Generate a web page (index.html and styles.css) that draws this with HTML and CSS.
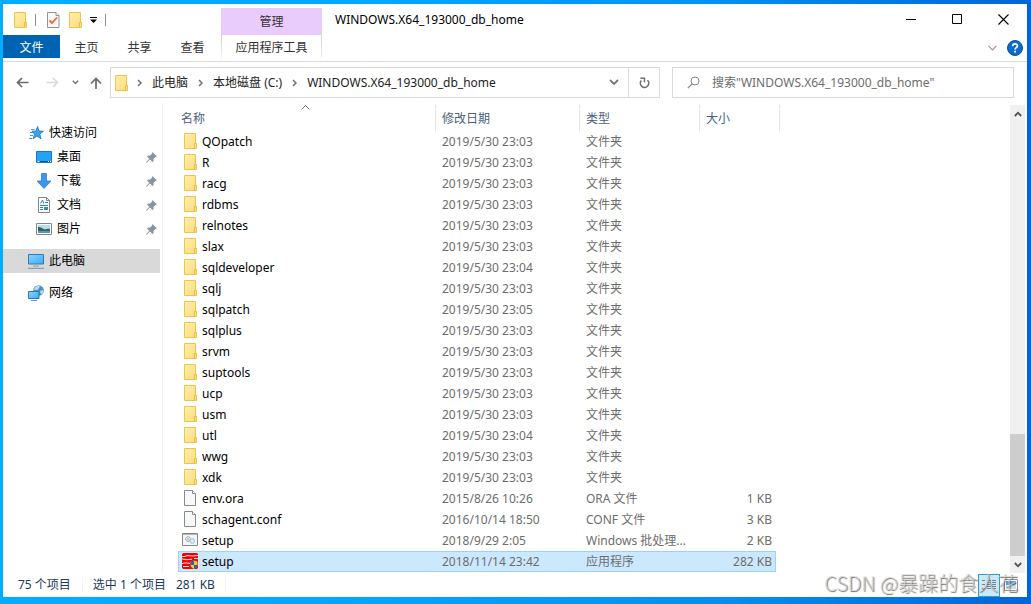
FILE: index.html
```html
<!DOCTYPE html>
<html lang="zh-CN">
<head>
<meta charset="utf-8">
<title>WINDOWS.X64_193000_db_home</title>
<link rel="stylesheet" href="styles.css">
</head>
<body>
<svg class="defs" aria-hidden="true">
  <linearGradient id="fold" x1="0" y1="0" x2="1" y2="1"><stop offset="0" stop-color="#ffeeb0"/><stop offset="1" stop-color="#fbdc77"/></linearGradient>
  <linearGradient id="screen" x1="0" y1="0" x2="1" y2="1"><stop offset="0" stop-color="#8fd3fd"/><stop offset="1" stop-color="#35adf8"/></linearGradient>
  <symbol id="folder" viewBox="0 0 14 16"><path d="M1.500.5h11v10h1v5h-12z" fill="url(#fold)" stroke="#ecc64c"/><path d="M11.500 15.500v-5h2" fill="none" stroke="#e8bd3e"/></symbol>
  <symbol id="page" viewBox="0 0 14 16"><path d="M1.500.5h8l3 3v12h-11z" fill="#f7f8f9" stroke="#8b8b8b"/><path d="M9.500.5v3h3" fill="#fff" stroke="#8b8b8b"/></symbol>
  <symbol id="pin" viewBox="0 0 11 11"><path d="M6.500 0 11 4.500 9.500 5 7.500 7v2.500L6.500 10 4 7.500.8 10.500 0 10.800l.4-1L3.300 6.700 1 4.500 2 3.500h2.300L6 1.500z" fill="#8995a0"/></symbol>
  <symbol id="chev-right" viewBox="0 0 5 8"><path d="M1 1l3 3-3 3" fill="none" stroke="#707070" stroke-width="1.500"/></symbol>
</svg>

<div class="window">
  <header class="titlebar">
    <div class="quick">
      <svg class="folder" width="14" height="16"><use href="#folder"/></svg>
      <span class="bar"></span>
      <button class="plain" aria-label="属性"><svg width="13" height="16" viewBox="0 0 13 16"><path d="M.5.5h8.500l3 3v12H.5z" fill="#f8f8f8" stroke="#929292"/><path d="M9 .5v3h3" fill="#fff" stroke="#929292"/><path d="M2.500 8.500 5 11l5-5.500" fill="none" stroke="#f0642a" stroke-width="1.800"/></svg></button>
      <button class="plain" aria-label="新建文件夹"><svg class="folder" width="14" height="16"><use href="#folder"/></svg></button>
      <button class="plain" aria-label="自定义快速访问工具栏"><svg width="7" height="6" viewBox="0 0 7 6"><path d="M0 .5h7" stroke="#000"/><path d="M0 2.500h7L3.500 6z"/></svg></button>
      <span class="bar"></span>
    </div>
    <div class="context">管理</div>
    <h1 class="title">WINDOWS.X64_193000_db_home</h1>
    <div class="controls">
      <button aria-label="最小化"><svg width="11" height="11" viewBox="0 0 11 11"><path d="M0 5.500h10" stroke="#000"/></svg></button>
      <button aria-label="最大化"><svg width="11" height="11" viewBox="0 0 11 11"><path d="M.5.5h9v9h-9z" fill="none" stroke="#000"/></svg></button>
      <button aria-label="关闭"><svg width="11" height="11" viewBox="0 0 11 11"><path d="M.5.5l10 10m0-10-10 10" stroke="#000" stroke-width="1.100"/></svg></button>
    </div>
  </header>

  <nav class="ribbon">
    <button class="file">文件</button>
    <button>主页</button>
    <button>共享</button>
    <button>查看</button>
    <button class="tools">应用程序工具</button>
    <div class="help">
      <button class="plain" aria-label="展开功能区"><svg width="9" height="6" viewBox="0 0 9 6"><path d="M.5.8l4 4 4-4" fill="none" stroke="#999" stroke-width="1.200"/></svg></button>
      <button class="plain" aria-label="帮助"><svg width="16" height="16" viewBox="0 0 16 16"><circle cx="8" cy="8" r="7.500" fill="#0a6cc4" stroke="#08549c"/><path d="M5.700 6.200c0-3 4.700-3 4.700-.3 0 1.800-2.300 1.700-2.300 3.600" fill="none" stroke="#fff" stroke-width="1.800"/><path d="M7.200 10.800h1.800v1.800H7.200z" fill="#fff"/></svg></button>
    </div>
  </nav>

  <div class="navrow">
    <div class="arrows">
      <button class="plain" aria-label="后退"><svg width="13" height="11" viewBox="0 0 13 11"><path d="M12.500 5.500H1.500M6 1 1.500 5.500 6 10" fill="none" stroke="#696969" stroke-width="1.700"/></svg></button>
      <button class="plain wide" aria-label="前进"><svg width="13" height="11" viewBox="0 0 13 11"><path d="M.5 5.500h11M7 1l4.500 4.500L7 10" fill="none" stroke="#d8d8d8" stroke-width="1.500"/></svg></button>
      <button class="plain small" aria-label="最近浏览的位置"><svg width="7" height="5" viewBox="0 0 7 5"><path d="M.8.8l2.700 2.700L6.200.8" fill="none" stroke="#777" stroke-width="1.500"/></svg></button>
      <button class="plain" aria-label="上移"><svg width="12" height="12" viewBox="0 0 12 12"><path d="M6 12V1.500M1 6.500l5-5 5 5" fill="none" stroke="#696969" stroke-width="1.700"/></svg></button>
    </div>
    <div class="address">
      <div class="crumbs">
        <svg class="folder" width="14" height="16"><use href="#folder"/></svg>
        <svg width="5" height="8"><use href="#chev-right"/></svg>
        <button class="plain">此电脑</button>
        <svg width="5" height="8"><use href="#chev-right"/></svg>
        <button class="plain">本地磁盘 (C:)</button>
        <svg width="5" height="8"><use href="#chev-right"/></svg>
        <button class="plain">WINDOWS.X64_193000_db_home</button>
      </div>
      <button class="drop" aria-label="以前的位置"><svg width="10" height="7" viewBox="0 0 10 7"><path d="M1 1l4 4 4-4" fill="none" stroke="#777" stroke-width="1.800"/></svg></button>
      <button class="refresh" aria-label="刷新"><svg width="11" height="12" viewBox="0 0 11 12"><path d="M8.500 3.200A4.200 4.200 0 1 1 2.300 3.500" fill="none" stroke="#707070" stroke-width="1.600"/><path d="M1.300 1.200h4.200v4" fill="none" stroke="#707070" stroke-width="1.500"/></svg></button>
    </div>
    <label class="search">
      <svg width="13" height="13" viewBox="0 0 13 13"><circle cx="8" cy="5" r="4" fill="none" stroke="#888"/><path d="M5 8 .8 12.200" stroke="#888" stroke-width="1.200"/></svg>
      <input type="text" aria-label="搜索" placeholder="搜索&quot;WINDOWS.X64_193000_db_home&quot;">
    </label>
  </div>

  <div class="content">
    <aside class="tree">
      <a class="root" href="#"><svg width="16" height="14" viewBox="0 0 16 14"><path d="M9.500.5 11 5l4.500.2-3.700 2.900 1.200 4.700-4-2.800-4 2.800 1.600-4.600L4 5.300l4-.3z" fill="#3da2ea" stroke="#1673bd" stroke-width=".8"/><path d="M3 3.500h3.500M2 6.500h3.500M2 9.500h3M1 12.500h3" stroke="#3b98dd"/></svg><span>快速访问</span></a>
      <a href="#"><svg width="16" height="12" viewBox="0 0 16 12"><path d="M.5.5h15v11H.5z" fill="#22a2f8" stroke="#1a78be"/><path d="M1 10.500h14" stroke="#0c5c9c"/><path d="M1.500 10.500h2M12 10.500h1M14 10.500h1" stroke="#fff"/></svg><span>桌面</span><svg class="pin" width="11" height="11"><use href="#pin"/></svg></a>
      <a href="#"><svg width="16" height="16" viewBox="0 0 16 16"><path d="M5.500.5h5v7.500H15L8 15.500 1 8h4.500z" fill="#3d97e8" stroke="#2f7fcd" stroke-width=".8"/></svg><span>下载</span><svg class="pin" width="11" height="11"><use href="#pin"/></svg></a>
      <a href="#"><svg width="16" height="16" viewBox="0 0 16 16"><path d="M2.500.5h8l3 3v12h-11z" fill="#fff" stroke="#858585"/><path d="M10.500.5v3h3" fill="none" stroke="#858585"/><path d="M4.500 6.500 6.500 3l1.300 3.500M9 5.500h3M4 8.500h8M4 10.500h3M4 12.500h3" fill="none" stroke="#2589d1"/><path d="M8 10h4v3H8z" fill="#4584a9"/></svg><span>文档</span><svg class="pin" width="11" height="11"><use href="#pin"/></svg></a>
      <a href="#"><svg width="16" height="12" viewBox="0 0 16 12"><path d="M.5.5h15v11H.5z" fill="#fff" stroke="#858585"/><path d="M2 2h12v8H2z" fill="#b5dcf9"/><path d="M2 4c3-.5 4 1.500 7 2.500 2-1 3-1 5-.5v2H2z" fill="#36665b"/><path d="M2 8h12v2H2z" fill="#5d93c2"/></svg><span>图片</span><svg class="pin" width="11" height="11"><use href="#pin"/></svg></a>
      <a class="root apart current" href="#"><svg width="16" height="15" viewBox="0 0 16 15"><path d="M.5.5h15v9.500H.5z" fill="url(#screen)" stroke="#2e7eb5"/><path d="M5 12h6" stroke="#8ba3b3"/><path d="M0 14.300h16" stroke="#6f95b2"/></svg><span>此电脑</span></a>
      <a class="root apart" href="#"><svg width="16" height="16" viewBox="0 0 16 16"><circle cx="10.500" cy="5.500" r="5.300" fill="#4b93bf"/><path d="M7 2.500c2-2 4-2 5-1L9.500 5H6zM12 6l3-1v3l-2 1.500z" fill="#b5def0"/><path d="M.5 6.500h10.500v7H.5z" fill="url(#screen)" stroke="#2d79ad"/><path d="M3 15.500h6" stroke="#6f95b2"/></svg><span>网络</span></a>
    </aside>

    <main class="files">
      <svg class="sort" width="9" height="5" viewBox="0 0 9 5"><path d="M.5 4.500l4-4 4 4" fill="none" stroke="#777"/></svg>
      <table>
        <thead><tr><th class="name">名称</th><th class="date">修改日期</th><th class="type">类型</th><th class="size">大小</th></tr></thead>
        <tbody>
          <tr><td><svg class="folder" width="14" height="16"><use href="#folder"/></svg>QOpatch</td><td>2019/5/30 23:03</td><td>文件夹</td><td></td></tr>
          <tr><td><svg class="folder" width="14" height="16"><use href="#folder"/></svg>R</td><td>2019/5/30 23:03</td><td>文件夹</td><td></td></tr>
          <tr><td><svg class="folder" width="14" height="16"><use href="#folder"/></svg>racg</td><td>2019/5/30 23:03</td><td>文件夹</td><td></td></tr>
          <tr><td><svg class="folder" width="14" height="16"><use href="#folder"/></svg>rdbms</td><td>2019/5/30 23:03</td><td>文件夹</td><td></td></tr>
          <tr><td><svg class="folder" width="14" height="16"><use href="#folder"/></svg>relnotes</td><td>2019/5/30 23:03</td><td>文件夹</td><td></td></tr>
          <tr><td><svg class="folder" width="14" height="16"><use href="#folder"/></svg>slax</td><td>2019/5/30 23:03</td><td>文件夹</td><td></td></tr>
          <tr><td><svg class="folder" width="14" height="16"><use href="#folder"/></svg>sqldeveloper</td><td>2019/5/30 23:04</td><td>文件夹</td><td></td></tr>
          <tr><td><svg class="folder" width="14" height="16"><use href="#folder"/></svg>sqlj</td><td>2019/5/30 23:03</td><td>文件夹</td><td></td></tr>
          <tr><td><svg class="folder" width="14" height="16"><use href="#folder"/></svg>sqlpatch</td><td>2019/5/30 23:05</td><td>文件夹</td><td></td></tr>
          <tr><td><svg class="folder" width="14" height="16"><use href="#folder"/></svg>sqlplus</td><td>2019/5/30 23:03</td><td>文件夹</td><td></td></tr>
          <tr><td><svg class="folder" width="14" height="16"><use href="#folder"/></svg>srvm</td><td>2019/5/30 23:03</td><td>文件夹</td><td></td></tr>
          <tr><td><svg class="folder" width="14" height="16"><use href="#folder"/></svg>suptools</td><td>2019/5/30 23:03</td><td>文件夹</td><td></td></tr>
          <tr><td><svg class="folder" width="14" height="16"><use href="#folder"/></svg>ucp</td><td>2019/5/30 23:03</td><td>文件夹</td><td></td></tr>
          <tr><td><svg class="folder" width="14" height="16"><use href="#folder"/></svg>usm</td><td>2019/5/30 23:03</td><td>文件夹</td><td></td></tr>
          <tr><td><svg class="folder" width="14" height="16"><use href="#folder"/></svg>utl</td><td>2019/5/30 23:04</td><td>文件夹</td><td></td></tr>
          <tr><td><svg class="folder" width="14" height="16"><use href="#folder"/></svg>wwg</td><td>2019/5/30 23:03</td><td>文件夹</td><td></td></tr>
          <tr><td><svg class="folder" width="14" height="16"><use href="#folder"/></svg>xdk</td><td>2019/5/30 23:03</td><td>文件夹</td><td></td></tr>
          <tr><td><svg width="14" height="16"><use href="#page"/></svg>env.ora</td><td>2015/8/26 10:26</td><td>ORA 文件</td><td>1 KB</td></tr>
          <tr><td><svg width="14" height="16"><use href="#page"/></svg>schagent.conf</td><td>2016/10/14 18:50</td><td>CONF 文件</td><td>3 KB</td></tr>
          <tr><td><svg width="16" height="16" viewBox="0 0 16 16"><path d="M.5 1.500h15v12H.5z" fill="#f6f6f6" stroke="#878787"/><path d="M1 2.500h14" stroke="#b0b0b0"/><circle cx="6" cy="7" r="2.300" fill="none" stroke="#777" stroke-dasharray="1.200 .6"/><circle cx="6" cy="7" r=".8" fill="#888"/><circle cx="10.300" cy="9" r="2.300" fill="#dcedf8" stroke="#7fa9c4" stroke-dasharray="1.200 .6"/></svg>setup</td><td>2018/9/29 2:05</td><td>Windows 批处理...</td><td>2 KB</td></tr>
          <tr class="selected"><td><svg width="16" height="16" viewBox="0 0 16 16"><path d="M1.500 0h13L16 1v14l-1 1H1l-1-1.500V1z" fill="#f40000"/><path d="M0 3.500h3l2-1 5 .5 6-.5M0 6l5 .7 5-.5M12 5.500h4M0 10.500l4-.7 4 .7M1 13.500h6" fill="none" stroke="#fff" stroke-width=".9"/><path d="M8.500 8.500 12 7.500l3.500 1v3.500c0 2-2 3-3.500 4-1.500-1-3.500-2-3.500-4z" fill="#f4c72d"/><path d="M8.500 8.500 12 7.500V12H8.500zM12 12h3.500c0 2-2 3-3.500 4z" fill="#1d65b5"/></svg>setup</td><td>2018/11/14 23:42</td><td>应用程序</td><td>282 KB</td></tr>
        </tbody>
      </table>
    </main>

    <div class="scroll">
      <button aria-label="向上滚动"><svg width="8" height="6" viewBox="0 0 8 6"><path d="M.8 5 4 1.800 7.200 5" fill="none" stroke="#555" stroke-width="1.800"/></svg></button>
      <div class="track"><div class="thumb"></div></div>
      <button aria-label="向下滚动"><svg width="8" height="6" viewBox="0 0 8 6"><path d="M.8 1 4 4.200 7.200 1" fill="none" stroke="#555" stroke-width="1.800"/></svg></button>
    </div>
  </div>

  <footer class="status">
    <span class="count">75 个项目</span>
    <span class="picked">选中 1 个项目</span>
    <span class="total">281 KB</span>
    <div class="views">
      <button class="on" aria-label="详细信息"><svg width="14" height="14" viewBox="0 0 14 14"><path d="M0 2.500h3M0 6.500h3M0 10.500h3M5 2.500h4M10 2.500h4M5 4.500h4M10 4.500h4M5 6.500h4M10 6.500h4M5 8.500h4M10 8.500h4M5 10.500h4M10 10.500h4" stroke="#6e8796"/><path d="M0 10h2v2H0z" fill="#e05050"/></svg></button>
      <button aria-label="大缩略图"><svg width="14" height="12" viewBox="0 0 14 12"><path d="M.5.5h13v11H.5z" fill="#fff" stroke="#8e979e"/><path d="M2 2h10v4H2z" fill="#5b9bf0"/><path d="M2 6l5 1 5-2v5H2z" fill="#cfdfe8"/></svg></button>
    </div>
    <div class="watermark">CSDN @暴躁的食人花</div>
  </footer>
</div>
</body>
</html>
```
FILE: styles.css
```css
* { box-sizing: border-box; }

body {
  margin: 0;
  min-height: 100vh;
  display: flex;
  padding: 4px 4px 7px 3px;
  background: linear-gradient(90deg, #00aeff 0%, #00a8fc 35%, #0090f0 70%, #0066d8 100%);
  font: 12px/16px "Noto Sans", "Noto Sans CJK SC", sans-serif;
  color: #000;
}

button {
  font: inherit;
  color: inherit;
  border: 0;
  padding: 0;
  background: none;
  display: flex;
  align-items: center;
  justify-content: center;
}

svg { flex: none; display: block; }
a { color: inherit; text-decoration: none; }
.defs { position: absolute; width: 0; height: 0; }

.window {
  flex: 1;
  min-width: 0;
  display: flex;
  flex-direction: column;
  background: #fff;
}

/* title bar */
.titlebar { display: flex; height: 31px; }
.quick { width: 218px; display: flex; align-items: center; gap: 8px; padding-left: 10px; }
.bar { width: 1px; height: 12px; background: #8c8c8c; }
.quick .bar + button { margin-left: 3px; }
.context { width: 101px; margin-top: 4px; background: #e9cbfc; color: #333; text-align: center; line-height: 27px; }
.title { flex: 1; margin: 0; padding-left: 13px; font-size: 12px; font-weight: 400; line-height: 31px; }
.controls { display: flex; margin-right: 1px; }
.controls button { width: 46px; }

/* ribbon tabs */
.ribbon { display: flex; height: 27px; padding-bottom: 3px; border-bottom: 1px solid #dadbdc; color: #333; }
.ribbon > button { width: 53px; padding-top: 2px; }
.ribbon > .file { width: 57px; background: #0063b1; color: #fff; }
.ribbon > .tools {
  width: 101px;
  margin-left: 2px;
  border: 1px solid;
  border-width: 0 1px;
  border-image: linear-gradient(#cfcfcf, #f2f2f2) 1;
}
.help { margin-left: auto; display: flex; align-items: center; gap: 10px; padding: 2px 4px 0 0; }

/* navigation row */
.navrow { display: flex; padding: 5px 13px 5px 6px; color: #222; }
.arrows { display: flex; width: 101px; align-items: center; }
.arrows button { width: 28px; height: 31px; }
.arrows .wide { width: 32px; }
.arrows .small { width: 14px; }
.address { flex: 550 1 550px; min-width: 0; height: 31px; display: flex; border: 1px solid #d9d9d9; }
.crumbs { flex: 1; min-width: 0; display: flex; align-items: center; gap: 10px; padding-left: 3px; white-space: nowrap; overflow: hidden; }
.crumbs .folder { margin-right: -1px; }
.drop { width: 28px; }
.refresh { width: 31px; border-left: 1px solid #d9d9d9; }
.search { flex: 342 1 342px; min-width: 0; height: 31px; margin-left: 12px; display: flex; align-items: center; gap: 12px; padding-left: 14px; border: 1px solid #d9d9d9; }
.search input { flex: 1; min-width: 0; border: 0; padding: 0; outline: 0; background: none; font: inherit; }
.search input::placeholder { color: #6d6d6d; opacity: 1; }

/* folder tree */
.content { flex: 1; display: flex; }
.tree { width: 160px; padding-top: 18px; border-right: 1px solid #f3f3f3; }
.tree a { display: flex; align-items: center; gap: 5px; height: 24px; padding-left: 33px; margin-right: 2px; }
.tree .root { padding-left: 25px; }
.tree .apart { margin-top: 8px; }
.tree .current { background: #d9d9d9; }
.pin { margin: 0 3px 0 auto; }

/* file list */
.files { position: relative; flex: 1; min-width: 0; padding: 2px 0 0 15px; }
.sort { position: absolute; left: 138px; top: 2px; }
table { width: 598px; table-layout: fixed; border-collapse: separate; border-spacing: 0; }
th { position: relative; height: 26px; padding: 2px 7px 0; text-align: left; font-weight: 400; color: #4c607a; border-right: 1px solid #e5e5e5; }
.name { width: 258px; padding-left: 3px; }
.date { width: 144px; padding-left: 6px; }
.type { width: 120px; padding-left: 6px; }
.size { padding-left: 6px; border-right: 0; }
.size::after { content: ""; position: absolute; right: -4px; top: 0; bottom: 0; width: 1px; background: #e5e5e5; }
td { height: 21px; padding: 0 4px 0 6px; color: #6d6d6d; white-space: nowrap; }
td:first-child { display: flex; align-items: center; gap: 4px; padding-left: 4px; color: #000; }
td:first-child svg { width: 16px; margin-bottom: 1px; }
td:last-child { text-align: right; }
.selected td { background: #cce8ff; border: 1px solid #99d1ff; border-width: 1px 0; }
.selected td:first-child { border-left-width: 1px; padding-left: 3px; }
.selected td:last-child { border-right-width: 1px; padding-right: 3px; }

/* scroll bar */
.scroll { width: 15px; margin: 2px 2px 0 0; display: flex; flex-direction: column; background: #f0f0f0; }
.scroll button { height: 17px; }
.track { flex: 1; display: flex; flex-direction: column; justify-content: flex-end; }
.thumb { height: 28%; background: #cdcdcd; }

/* status bar */
.status { position: relative; display: flex; align-items: center; height: 24px; padding: 0 5px 0 15px; color: #1e395b; }
.picked { margin-left: 11px; padding-left: 10px; border-left: 1px solid #f3f3f3; }
.total { margin-left: 10px; padding-right: 10px; border-right: 1px solid #f3f3f3; }
.views { margin-left: auto; display: flex; }
.views button { width: 22px; height: 23px; }
.views .on { border: 1px solid #26a0da; background: #cce8f5; }
.watermark {
  position: absolute;
  right: 9px;
  bottom: 1px;
  font: 20px/26px "Noto Sans CJK SC", sans-serif;
  font-weight: 300;
  color: rgba(215, 215, 215, 0.8);
  text-shadow: 1px 1px 1px rgba(70, 70, 70, 0.8);
  white-space: nowrap;
}
```
